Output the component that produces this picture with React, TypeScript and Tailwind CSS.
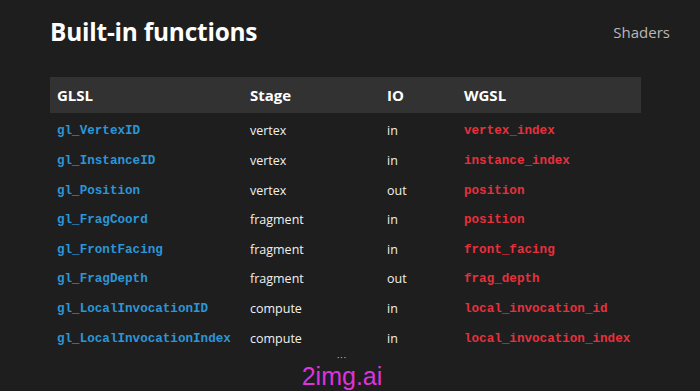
const rows = [
  ["gl_VertexID", "vertex", "in", "vertex_index"],
  ["gl_InstanceID", "vertex", "in", "instance_index"],
  ["gl_Position", "vertex", "out", "position"],
  ["gl_FragCoord", "fragment", "in", "position"],
  ["gl_FrontFacing", "fragment", "in", "front_facing"],
  ["gl_FragDepth", "fragment", "out", "frag_depth"],
  ["gl_LocalInvocationID", "compute", "in", "local_invocation_id"],
  ["gl_LocalInvocationIndex", "compute", "in", "local_invocation_index"],
];

export default function App() {
  return (
    <div className="flex h-[391px] w-[700px] flex-col overflow-hidden bg-[#1e1e1e] font-['Open_Sans',sans-serif] text-white">
      <div className="flex items-center justify-between pl-[50px] pr-[30px] pt-[16px]">
        <h1 className="text-[24.4px] font-bold leading-[32px] tracking-[-0.2px]">Built-in functions</h1>
        <span className="text-[15px] text-[#b8b8b8]">Shaders</span>
      </div>
      <div className="ml-[50px] mt-[29px] w-[591px]">
        <div className="grid h-[36px] grid-cols-[193px_137px_77px_1fr] items-center bg-[#323232] pl-[7px] text-[15px] font-bold">
          <span>GLSL</span>
          <span>Stage</span>
          <span>IO</span>
          <span>WGSL</span>
        </div>
        <div className="pt-[4px]">
          {rows.map(([glsl, stage, io, wgsl]) => (
            <div
              key={glsl}
              className="grid h-[29.6px] grid-cols-[193px_137px_77px_1fr] items-center pl-[7px] text-[12.5px]"
            >
              <span className="font-['Liberation_Mono',monospace] text-[12.6px] font-bold text-[#2b96d8]">{glsl}</span>
              <span className="text-[#f0f0f0]">{stage}</span>
              <span className="text-[#f0f0f0]">{io}</span>
              <span className="font-['Liberation_Mono',monospace] text-[12.6px] font-bold text-[#e8303c]">{wgsl}</span>
            </div>
          ))}
        </div>
      </div>
      <div className="mt-auto flex flex-col items-center pr-[16px]">
        <span className="text-[9px] leading-[8px] tracking-[1px] text-[#dddddd]">···</span>
        <span className="font-['Liberation_Sans',sans-serif] text-[25px] leading-[29px] text-[#dd33dd]">2img.ai</span>
      </div>
    </div>
  );
}
